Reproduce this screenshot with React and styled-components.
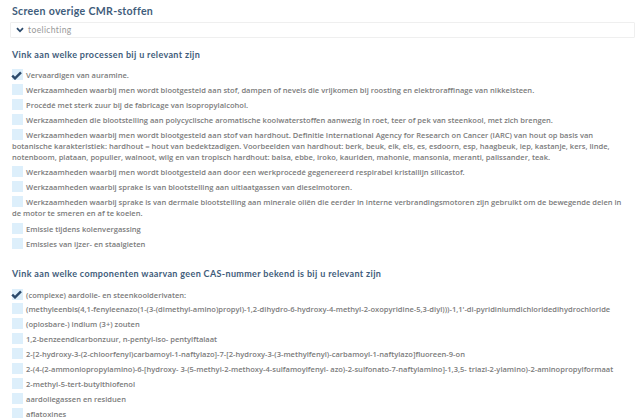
import React from "react";
import styled, { createGlobalStyle } from "styled-components";

const GlobalStyle = createGlobalStyle`
  html, body {
    margin: 0;
    padding: 0;
    background: #fff;
  }
  body {
    font-family: "Open Sans", "Liberation Sans", sans-serif;
  }
`;

const Page = styled.div`
  padding: 4px 5px 0 10px;
`;

const Title = styled.h2`
  margin: 0 0 0 2px;
  font-family: "Lato", "DejaVu Sans", sans-serif;
  font-weight: 700;
  font-size: 10.6px;
  line-height: 14px;
  letter-spacing: 0.3px;
  color: #3f5d7b;
`;

const Toggle = styled.div`
  margin-top: 4px;
  height: 14px;
  border: 1px solid #efefef;
  border-radius: 1px;
  display: flex;
  align-items: center;
  gap: 4px;
  padding-left: 5px;
  font-family: "Lato", "DejaVu Sans", sans-serif;
  font-size: 8.6px;
  letter-spacing: 0.35px;
  color: #999;
`;

const Heading = styled.h3`
  margin: ${(p) => p.$top}px 0 0 2px;
  font-family: "Lato", "DejaVu Sans", sans-serif;
  font-weight: 700;
  font-size: 9px;
  line-height: 12px;
  letter-spacing: 0.35px;
  color: #3f5d7b;
`;

const List = styled.div`
  margin-top: ${(p) => p.$top}px;
  padding-left: 2px;
  padding-right: 9px;
`;

const Item = styled.div`
  font-size: 7.55px;
  font-weight: 600;
  line-height: 11.5px;
  color: #7b7b7b;
  margin-bottom: 2.9px;
`;

const Box = styled.span`
  position: relative;
  display: inline-block;
  width: 11px;
  height: 11px;
  margin-right: 3px;
  vertical-align: -2.5px;
  background: #ddeffb;

  svg {
    position: absolute;
    left: -1px;
    top: 1.5px;
  }
`;

const Check = () => (
  <svg width="11" height="9" viewBox="0 0 11 9">
    <path d="M1.2 4.6 L4 7.4 L10 1.3" fill="none" stroke="#2b4a6c" strokeWidth="2.4" />
  </svg>
);

const Chevron = () => (
  <svg width="8" height="6" viewBox="0 0 8 6">
    <path d="M1 1.2 L4 4.3 L7 1.2" fill="none" stroke="#2b4a6c" strokeWidth="1.8" />
  </svg>
);

const processen = [
  { t: "Vervaardigen van auramine.", c: true },
  { t: "Werkzaamheden waarbij men wordt blootgesteld aan stof, dampen of nevels die vrijkomen bij roosting en elektroraffinage van nikkelsteen." },
  { t: "Procédé met sterk zuur bij de fabricage van isopropylalcohol." },
  { t: "Werkzaamheden die blootstelling aan polycyclische aromatische koolwaterstoffen aanwezig in roet, teer of pek van steenkool, met zich brengen." },
  { t: "Werkzaamheden waarbij men wordt blootgesteld aan stof van hardhout. Definitie International Agency for Research on Cancer (IARC) van hout op basis van botanische karakteristiek: hardhout = hout van bedektzadigen. Voorbeelden van hardhout: berk, beuk, eik, els, es, esdoorn, esp, haagbeuk, iep, kastanje, kers, linde, notenboom, plataan, populier, walnoot, wilg en van tropisch hardhout: balsa, ebbe, iroko, kauriden, mahonie, mansonia, meranti, palissander, teak." },
  { t: "Werkzaamheden waarbij men wordt blootgesteld aan door een werkprocedé gegenereerd respirabel kristallijn silicastof." },
  { t: "Werkzaamheden waarbij sprake is van blootstelling aan uitlaatgassen van dieselmotoren." },
  { t: "Werkzaamheden waarbij sprake is van dermale blootstelling aan minerale oliën die eerder in interne verbrandingsmotoren zijn gebruikt om de bewegende delen in de motor te smeren en af te koelen." },
  { t: "Emissie tijdens kolenvergassing" },
  { t: "Emissies van ijzer- en staalgieten" },
];

const componenten = [
  { t: "(complexe) aardolie- en steenkoolderivaten:", c: true },
  { t: "(methyleenbis(4,1-fenyleenazo(1-(3-(dimethyl-amino)propyl)-1,2-dihydro-6-hydroxy-4-methyl-2-oxopyridine-5,3-diyl)))-1,1'-di-pyridiniumdichloridedihydrochloride" },
  { t: "(oplosbare-) indium (3+) zouten" },
  { t: "1,2-benzeendicarbonzuur, n-pentyl-iso- pentylftalaat" },
  { t: "2-[2-hydroxy-3-(2-chloorfenyl)carbamoyl-1-naftylazo]-7-[2-hydroxy-3-(3-methylfenyl)-carbamoyl-1-naftylazo]fluoreen-9-on" },
  { t: "2-(4-(2-ammoniopropylamino)-6-[hydroxy- 3-(5-methyl-2-methoxy-4-sulfamoylfenyl- azo)-2-sulfonato-7-naftylamino]-1,3,5- triazi-2-ylamino)-2-aminopropylformaat" },
  { t: "2-methyl-5-tert-butylthiofenol" },
  { t: "aardoliegassen en residuen" },
  { t: "aflatoxines" },
];

const Options = ({ items }) =>
  items.map((it, i) => (
    <Item key={i}>
      <Box>{it.c && <Check />}</Box>
      {it.t}
    </Item>
  ));

export default function App() {
  return (
    <>
      <GlobalStyle />
      <Page>
        <Title>Screen overige CMR-stoffen</Title>
        <Toggle>
          <Chevron />
          toelichting
        </Toggle>
        <Heading $top={11}>Vink aan welke processen bij u relevant zijn</Heading>
        <List $top={8}>
          <Options items={processen} />
        </List>
        <Heading $top={18}>
          Vink aan welke componenten waarvan geen CAS-nummer bekend is bij u relevant zijn
        </Heading>
        <List $top={9}>
          <Options items={componenten} />
        </List>
      </Page>
    </>
  );
}
